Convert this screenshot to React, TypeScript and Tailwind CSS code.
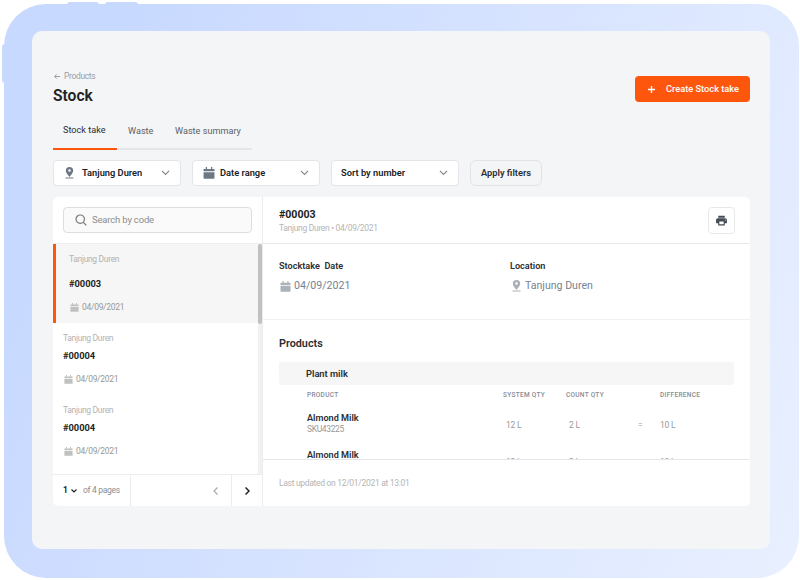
import React from 'react';
import { clsx } from 'clsx';

type IconProps = { className?: string };

function CalendarIcon({ className }: IconProps) {
  return (
    <svg className={className} viewBox="0 0 22 22" fill="currentColor">
      <path d="M1 8V3.500h4V0h2.400v3.500h7.200V0H17v3.500h4V8z" />
      <path d="M1 9.600h20V20a1.500 1.500 0 0 1-1.500 1.500h-17A1.500 1.500 0 0 1 1 20z" />
    </svg>
  );
}

function PinIcon({ className }: IconProps) {
  return (
    <svg className={className} viewBox="0 0 18 24" fill="currentColor">
      <path d="M9 0a7.300 7.300 0 0 0-7.300 7.300C1.700 12.600 9 19.500 9 19.500s7.300-6.900 7.300-12.200A7.300 7.300 0 0 0 9 0zm0 9.700a2.500 2.500 0 1 1 0-5 2.500 2.500 0 0 1 0 5z" />
      <path d="M1 21h16v2H1z" />
    </svg>
  );
}

function ChevronIcon({ className }: IconProps) {
  return (
    <svg className={className} viewBox="0 0 10 6" fill="none" stroke="currentColor" strokeWidth="1.2">
      <path d="M1 0.800 5 4.800 9 0.800" />
    </svg>
  );
}

function PrintIcon({ className }: IconProps) {
  return (
    <svg className={className} viewBox="0 0 24 24" fill="currentColor">
      <path d="M19 8H5c-1.660 0-3 1.340-3 3v6h4v4h12v-4h4v-6c0-1.660-1.340-3-3-3zm-3 11H8v-5h8v5zm3-7c-.550 0-1-.450-1-1s.450-1 1-1 1 .450 1 1-.450 1-1 1zm-1-9H6v4h12V3z" />
    </svg>
  );
}

const stockTakes = [
  { id: 1, code: '#00003', location: 'Tanjung Duren', date: '04/09/2021', active: true },
  { id: 2, code: '#00004', location: 'Tanjung Duren', date: '04/09/2021', active: false },
  { id: 3, code: '#00004', location: 'Tanjung Duren', date: '04/09/2021', active: false },
];

const products = [
  { id: 1, name: 'Almond Milk', sku: 'SKU43225', system: '12 L', count: '2 L', difference: '10 L' },
  { id: 2, name: 'Almond Milk', sku: 'SKU43225', system: '12 L', count: '2 L', difference: '10 L' },
];

function Select({ label, icon }: { label: string; icon?: React.ReactNode }) {
  return (
    <button className="flex h-[26px] w-32 items-center rounded-[4px] border border-[#e3e5e8] bg-white pr-[10px] pl-[9px] text-[9.300px] font-semibold text-[#202225]">
      {icon}
      <span className="whitespace-nowrap">{label}</span>
      <ChevronIcon className="ml-auto h-[5.500px] w-[9px] text-[#808489]" />
    </button>
  );
}

function StockTakeItem({ item }: { item: (typeof stockTakes)[number] }) {
  return (
    <div
      className={clsx(
        'flex shrink-0 flex-col',
        item.active ? 'h-[79px] border-l-[3px] border-[#ff560e] bg-[#f6f6f6] pt-[10px] pl-[13px]' : 'h-[72px] pt-[10px] pl-[10px]'
      )}
    >
      <div className="text-[8.500px] leading-[11px] tracking-[-0.330px] text-[#b3b3b3]">{item.location}</div>
      <div className={clsx('text-[9.300px] leading-3 font-bold text-[#1d1f22]', item.active ? 'mt-[13px]' : 'mt-[6px]')}>{item.code}</div>
      <div className="mt-[11px] flex items-center text-[8.500px] leading-3 tracking-[-0.300px] text-[#989898]">
        <CalendarIcon className="mr-[3px] ml-[1px] size-[9px] text-[#c1c1c1]" />
        {item.date}
      </div>
    </div>
  );
}

function Sidebar() {
  return (
    <div className="flex w-[210px] flex-col border-r border-[#ececec]">
      <div className="h-[47px] border-b border-[#eeeeee] px-[10px] pt-[10px]">
        <div className="flex h-[26px] w-[189px] items-center rounded-[4px] border border-[#dcdedf] bg-[#fafafa] pl-[11px] text-[9.500px] tracking-[-0.180px] text-[#8d8d8d]">
          <svg className="mr-[5px] size-3 text-[#777777]" viewBox="0 0 12 12" fill="none" stroke="currentColor" strokeWidth="1.200">
            <circle cx="5.200" cy="5.200" r="4.200" />
            <path d="m8.300 8.300 3 3" />
          </svg>
          Search by code
        </div>
      </div>
      <div className="flex h-[230px]">
        <div className="flex flex-1 flex-col overflow-hidden">
          {stockTakes.map((item) => (
            <StockTakeItem key={item.id} item={item} />
          ))}
        </div>
        <div className="w-1 bg-[#f1f1f1]">
          <div className="h-20 rounded-full bg-[#c1c1c1]"></div>
        </div>
      </div>
      <div className="flex h-8 border-t border-[#ececec] text-[8.500px]">
        <div className="flex w-[78px] items-center border-r border-[#ececec] pl-[10px]">
          <span className="font-bold text-[#202225]">1</span>
          <svg className="ml-[3px] h-1 w-[6px] text-[#202225]" viewBox="0 0 6 4" fill="none" stroke="currentColor" strokeWidth="1.200">
            <path d="m.500.500 2.500 2.500L5.500.500" />
          </svg>
          <span className="ml-[6px] tracking-[-0.300px] whitespace-nowrap text-[#8d8d8d]">of 4 pages</span>
        </div>
        <div className="flex w-[101px] items-center justify-end border-r border-[#ececec] pr-[13px]">
          <svg className="h-2 w-[5px] text-[#a7abb0]" viewBox="0 0 5 8" fill="none" stroke="currentColor" strokeWidth="1.200">
            <path d="M4.500.500 1 4l3.500 3.500" />
          </svg>
        </div>
        <div className="flex flex-1 items-center justify-center">
          <svg className="h-2 w-[5px] text-[#202225]" viewBox="0 0 5 8" fill="none" stroke="currentColor" strokeWidth="1.500">
            <path d="M.500.500 4 4 .500 7.500" />
          </svg>
        </div>
      </div>
    </div>
  );
}

function ProductRow({ product }: { product: (typeof products)[number] }) {
  return (
    <div className="flex h-[37px] text-[8.500px] tracking-[-0.250px] text-[#999999]">
      <div className="w-[199px]">
        <div className="text-[9.150px] leading-3 font-semibold tracking-normal text-[#2b2d30]">{product.name}</div>
        <div className="text-[8.500px] leading-[11px] tracking-[-0.350px]">{product.sku}</div>
      </div>
      <div className="w-[63px] pt-[7px] leading-3">{product.system}</div>
      <div className="w-[69px] pt-[7px] leading-3">{product.count}</div>
      <div className="w-[22px] pt-[7px] leading-3">=</div>
      <div className="pt-[7px] leading-3">{product.difference}</div>
    </div>
  );
}

function Details() {
  return (
    <div className="flex flex-1 flex-col">
      <div className="flex h-[47px] justify-between border-b border-[#e9e9e9] pt-[10px] pr-[15px] pl-4">
        <div className="pt-[2px]">
          <div className="text-[10.600px] leading-3 font-bold text-[#202225]">#00003</div>
          <div className="mt-[2px] text-[8.500px] leading-[11px] tracking-[-0.310px] text-[#b5b5b5]">Tanjung Duren • 04/09/2021</div>
        </div>
        <button className="flex size-[27px] items-center justify-center rounded-[4px] border border-[#e6e8ea]">
          <PrintIcon className="size-[13px] text-[#434b55]" />
        </button>
      </div>
      <div className="flex h-[76px] border-b border-[#f0f0f0] pt-4 pl-4">
        <div className="w-[231px]">
          <div className="text-[9.150px] leading-[13px] font-semibold whitespace-pre text-[#2b2d30]">Stocktake  Date</div>
          <div className="mt-[5px] flex items-center text-[10.600px] leading-4 text-[#768391]">
            <CalendarIcon className="mr-[3px] ml-[1px] size-[11px] text-[#aab1b9]" />
            04/09/2021
          </div>
        </div>
        <div>
          <div className="text-[9.150px] leading-[13px] font-semibold text-[#2b2d30]">Location</div>
          <div className="mt-[5px] flex items-center text-[10.600px] leading-4 text-[#768391]">
            <PinIcon className="mr-1 ml-[2px] h-3 w-[9px] text-[#aab1b9]" />
            Tanjung Duren
          </div>
        </div>
      </div>
      <div className="h-[139px] overflow-hidden pt-4 pl-4">
        <div className="text-[10.800px] leading-[15px] font-semibold text-[#2b2d30]">Products</div>
        <div className="mt-[11px] flex h-[23px] w-[455px] items-center rounded-[2px] bg-[#f6f6f6] pt-px pl-[27px] text-[9.300px] font-semibold text-[#2b2d30]">Plant milk</div>
        <div className="mt-[5px] flex pl-7 text-[6.500px] leading-[11px] font-medium tracking-[0.3px] text-[#868b95]">
          <div className="w-[196px]">PRODUCT</div>
          <div className="w-[63px]">SYSTEM QTY</div>
          <div className="w-[94px]">COUNT QTY</div>
          <div>DIFFERENCE</div>
        </div>
        <div className="pt-[11px] pl-7">
          {products.map((product) => (
            <ProductRow key={product.id} product={product} />
          ))}
        </div>
      </div>
      <div className="flex flex-1 items-center border-t border-[#e6e6e6] pl-4 text-[8.500px] tracking-[-0.310px] text-[#b5b5b5]">
        Last updated on 12/01/2021 at 13:01
      </div>
    </div>
  );
}

export default function App() {
  return (
    <div className="relative h-[580px] w-[800px] overflow-hidden bg-white pt-1 pl-1 font-['Roboto',sans-serif]">
      {/* Hardware buttons on the tablet frame */}
      <div className="absolute top-[2px] left-[67px] h-[3px] w-8 rounded-t-sm bg-[#c8d9fe]"></div>
      <div className="absolute top-[2px] left-[105px] h-[3px] w-[33px] rounded-t-sm bg-[#c8d9fe]"></div>
      <div className="absolute top-[44px] left-[2px] h-[39px] w-[3px] rounded-l-sm bg-[#c8d9fe]"></div>

      <div className="h-[574px] w-[795px] rounded-[42px] bg-linear-[112deg] from-[#c8d9ff] from-12% via-[#d8e4ff] via-55% to-[#e9f0ff] pt-[27px] pl-7">
        <div className="h-[518px] w-[738px] rounded-[10px] bg-[#f4f5f7] pt-[39px] pr-5 pl-[21px]">
          <div className="flex h-[48px] justify-between">
            <div>
              <div className="flex items-center text-[8.500px] leading-3 tracking-[-0.350px] text-[#9a9fa5]">
                <svg className="mr-[4px] ml-[1px] h-[5px] w-[6px]" viewBox="0 0 6 5" fill="none" stroke="currentColor">
                  <path d="M6 2.500H.800M2.700.400.600 2.500l2.100 2.100" />
                </svg>
                Products
              </div>
              <h1 className="mt-[4px] text-[15.600px] leading-5 font-semibold text-[#202225]">Stock</h1>
            </div>
            <button className="mt-[6px] flex h-[26px] w-[115px] items-center rounded-[4px] bg-[#ff560e] pl-[13px] text-[9.250px] font-medium whitespace-nowrap text-white">
              <svg className="mr-[11px] size-[7px]" viewBox="0 0 7 7" fill="none" stroke="currentColor" strokeWidth="1.400">
                <path d="M3.500 0v7M0 3.500h7" />
              </svg>
              Create Stock take
            </button>
          </div>

          <div className="flex h-8 w-[199px] border-b-2 border-[#e4e6e8] text-[9.150px] leading-3 text-[#5c6066]">
            <div className="-mb-[2px] w-16 border-b-2 border-[#ff560e] pt-[6px] pl-[10px] text-[#2b2d30]">Stock take</div>
            <div className="w-[58px] pt-[7px] pl-[11px]">Waste</div>
            <div className="pt-[7px] whitespace-nowrap">Waste summary</div>
          </div>

          <div className="mt-[10px] flex gap-[11px]">
            <Select label="Tanjung Duren" icon={<PinIcon className="mr-[8px] ml-[2px] h-3 w-[9px] text-[#6c7884]" />} />
            <Select label="Date range" icon={<CalendarIcon className="mr-[5px] ml-[1px] size-3 text-[#6c7884]" />} />
            <Select label="Sort by number" />
            <button className="h-[26px] w-[72px] rounded-[6px] border border-[#e0e2e5] text-[9.300px] font-semibold text-[#2b2d30]">Apply filters</button>
          </div>

          <div className="mt-[11px] flex h-[309px] overflow-hidden rounded-[5px] bg-white">
            <Sidebar />
            <Details />
          </div>
        </div>
      </div>
    </div>
  );
}
